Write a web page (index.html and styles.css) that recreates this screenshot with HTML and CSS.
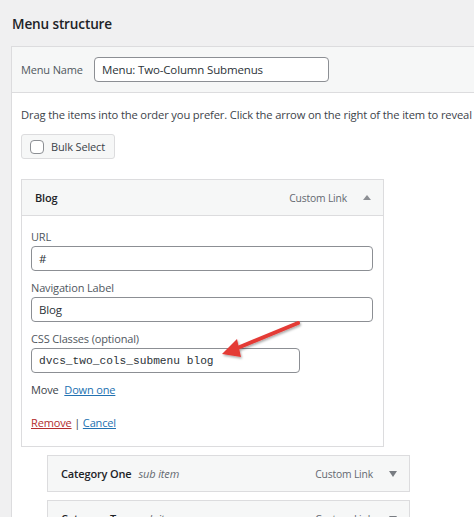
FILE: index.html
```html
<!DOCTYPE html>
<html>
<head>
    <meta name="viewport" content="width=device-width">
    <link rel="stylesheet" href="styles.css">
</head>
<body>
<div class="page">
    <div class="page-header">
        <h2>Menu structure</h2>
    </div>
    <div class="panel">
        <div class="name-row">
            <label class="name-label">Menu Name</label>
            <div class="text-input name-input">Menu: Two-Column Submenus</div>
        </div>
        <div class="panel-body">
            <p class="desc">Drag the items into the order you prefer. Click the arrow on the right of the item to reveal</p>
            <div class="bulk-button"><span class="checkbox"></span>Bulk Select</div>

            <div class="menu-item open">
                <div class="item-bar">
                    <span class="item-title">Blog</span>
                    <span class="item-type">Custom Link</span>
                    <span class="toggle up"></span>
                </div>
                <div class="item-settings">
                    <div class="field">
                        <div class="field-label">URL</div>
                        <div class="text-input wide">#</div>
                    </div>
                    <div class="field">
                        <div class="field-label">Navigation Label</div>
                        <div class="text-input wide">Blog</div>
                    </div>
                    <div class="field">
                        <div class="field-label">CSS Classes (optional)</div>
                        <div class="text-input code">dvcs_two_cols_submenu blog</div>
                    </div>
                    <div class="move-row">Move <a href="#">Down one</a></div>
                    <div class="actions"><a href="#" class="remove">Remove</a> | <a href="#">Cancel</a></div>
                </div>
                <svg class="arrow" width="100" height="50" viewBox="0 0 100 50">
                    <defs>
                        <filter id="shade" x="-20%" y="-40%" width="140%" height="180%">
                            <feDropShadow dx="1" dy="1.5" stdDeviation="1.2" flood-color="#000" flood-opacity="0.35"/>
                        </filter>
                    </defs>
                    <g filter="url(#shade)">
                        <line x1="79" y1="5" x2="16" y2="31" stroke="#e43a36" stroke-width="4" stroke-linecap="round"/>
                        <path d="M3 36 L18 21 L22 39 Z" fill="#e43a36"/>
                    </g>
                </svg>
            </div>

            <div class="menu-item sub">
                <div class="item-bar">
                    <span class="item-title">Category One</span>
                    <span class="item-sub">sub item</span>
                    <span class="item-type">Custom Link</span>
                    <span class="toggle down"></span>
                </div>
            </div>
            <div class="menu-item sub">
                <div class="item-bar">
                    <span class="item-title">Category Two</span>
                    <span class="item-sub">sub item</span>
                    <span class="item-type">Custom Link</span>
                    <span class="toggle down"></span>
                </div>
            </div>
        </div>
    </div>
</div>
</body>
</html>
```

FILE: styles.css
```css
body {
    margin: 0;
    background: #f0f0f1;
    font-family: "Open Sans", "Noto Sans", sans-serif;
    font-size: 11px;
    letter-spacing: -0.15px;
    color: #3c434a;
    overflow: hidden;
    height: 517px;
}

.page {
    padding-left: 11px;
}

.page-header {
    height: 46px;
    display: flex;
    align-items: center;
}

.page-header h2 {
    margin: 0 0 0 1px;
    font-size: 13.6px;
    font-weight: 600;
    color: #1d2327;
}

.panel {
    width: 620px;
    background: #fff;
    border-top: 1px solid #dcdcde;
    border-left: 1px solid #dcdcde;
    height: 480px;
}

.name-row {
    height: 45px;
    background: #f6f7f7;
    border-bottom: 1px solid #dcdcde;
    display: flex;
    align-items: center;
    padding-left: 9px;
}

.name-label {
    width: 73px;
    color: #50575e;
}

.text-input {
    box-sizing: border-box;
    height: 25px;
    border: 1px solid #8c8f94;
    border-radius: 4px;
    background: #fff;
    display: flex;
    align-items: center;
    padding-left: 7px;
    color: #2c3338;
}

.name-input {
    width: 235px;
    font-size: 11.5px;
}

.panel-body {
    padding-left: 9px;
}

.desc {
    margin: 13px 0 0;
    white-space: nowrap;
    line-height: 17px;
    font-size: 11.2px;
}

.bulk-button {
    box-sizing: border-box;
    margin-top: 11px;
    width: 94px;
    height: 25px;
    background: #f6f7f7;
    border: 1px solid #dcdcde;
    border-radius: 3px;
    display: flex;
    align-items: center;
    padding-left: 8px;
    gap: 7px;
}

.checkbox {
    box-sizing: border-box;
    width: 14px;
    height: 14px;
    border: 1px solid #8c8f94;
    border-radius: 4px;
    background: #fff;
}

.menu-item {
    position: relative;
    box-sizing: border-box;
    width: 363px;
}

.menu-item.open {
    margin-top: 20px;
}

.item-bar {
    box-sizing: border-box;
    height: 37px;
    background: #f6f7f7;
    border: 1px solid #dcdcde;
    display: flex;
    align-items: center;
    padding: 0 12px 0 13px;
}

.item-title {
    font-weight: 600;
    color: #1d2327;
}

.item-sub {
    margin-left: 7px;
    font-style: italic;
    color: #646970;
}

.item-type {
    margin-left: auto;
    color: #646970;
    font-size: 10.3px;
}

.toggle {
    width: 0;
    height: 0;
    margin-left: 16px;
    border-left: 4px solid transparent;
    border-right: 4px solid transparent;
}

.toggle.up {
    border-bottom: 5px solid #8c8f94;
}

.toggle.down {
    border-top: 6px solid #787c82;
}

.item-settings {
    box-sizing: border-box;
    height: 231px;
    border: 1px solid #dcdcde;
    border-top: 0;
    padding: 12px 9px 0 9px;
}

.field-label {
    line-height: 18px;
    color: #50575e;
}

.field {
    margin-bottom: 8px;
}

.text-input.wide {
    width: 342px;
    font-size: 11.5px;
}

.text-input.code {
    width: 269px;
    font-family: "Liberation Mono", "DejaVu Sans Mono", monospace;
    font-size: 11.2px;
    letter-spacing: 0;
}

.move-row {
    line-height: 18px;
}

.move-row a {
    margin-left: 3px;
}

a {
    color: #2271b1;
}

a.remove {
    color: #b32d2e;
}

.actions {
    margin-top: 15px;
    line-height: 18px;
}

.menu-item.sub {
    margin-left: 26px;
    margin-top: 8px;
}

.arrow {
    position: absolute;
    left: 198px;
    top: 139px;
}
```
